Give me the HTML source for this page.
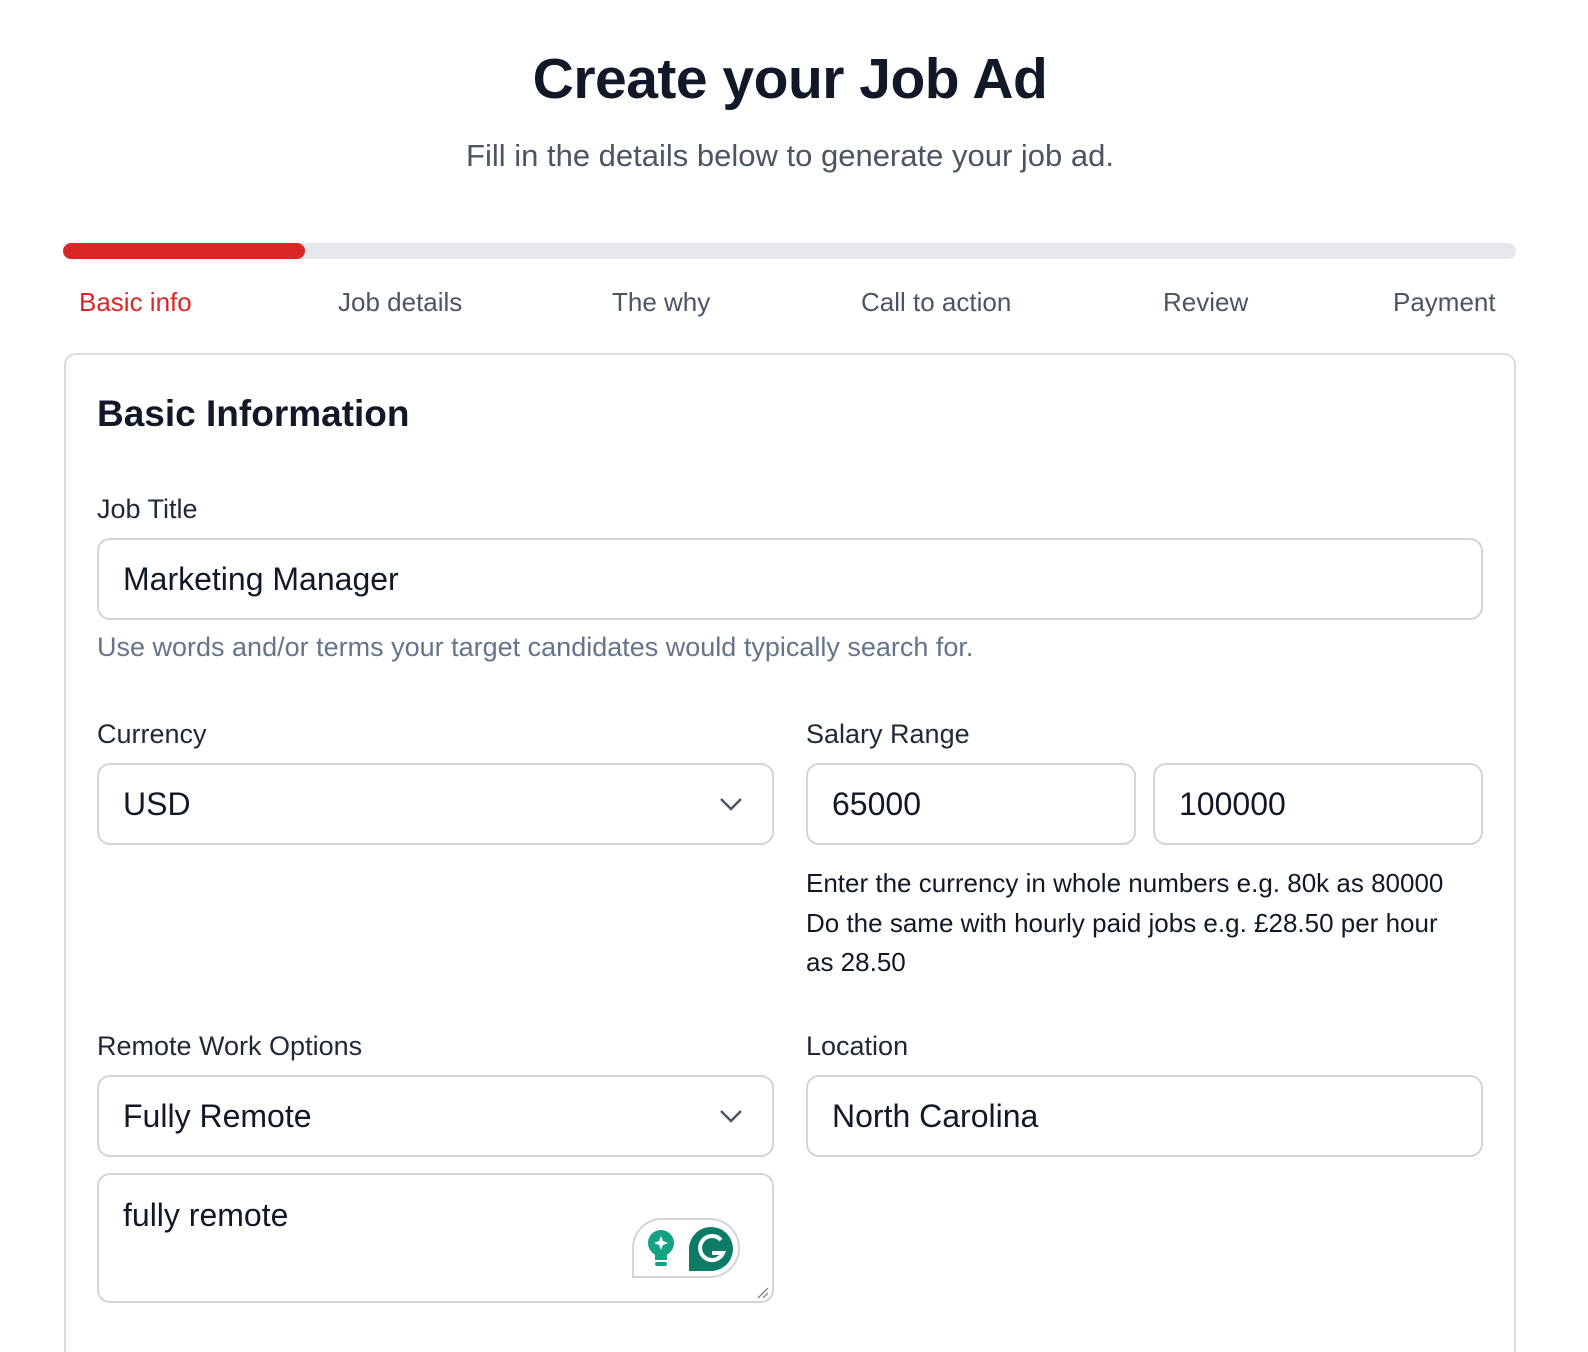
<!DOCTYPE html>
<html><head><meta charset="utf-8"><style>
*{box-sizing:border-box;margin:0;padding:0}
html,body{width:1588px;height:1352px;overflow:hidden}
body{background:#fff;font-family:"Liberation Sans",sans-serif;color:#111827;position:relative}
#wrap{position:absolute;left:0;top:0;width:1588px;height:1352px;overflow:hidden}
.abs{position:absolute}
h1{position:absolute;left:0;width:1580px;text-align:center;top:46px;font-size:57px;font-weight:700;letter-spacing:-0.5px;color:#111827}
.sub{left:0;width:1580px;text-align:center;top:138px;font-size:31px;color:#4b5563}
.bar{left:63px;top:243px;width:1453px;height:16px;border-radius:8px;background:#e5e7eb}
.bar i{position:absolute;left:0;top:0;width:242px;height:16px;border-radius:8px;background:#dc2626}
.tab{top:287px;font-size:26px;color:#4b5563}
.card{left:64px;top:353px;width:1452px;height:1040px;border:2px solid #d8dce2;border-radius:12px}
.lbl{font-size:27px;color:#1f2937}
.inp{border:2px solid #d1d5db;border-radius:13px;height:82px;font-size:32px;padding-left:24px;display:flex;align-items:center;color:#111827}
.help{font-size:27px;color:#64748b}
.chev{position:absolute;right:28px;top:30px}
</style></head><body><div id="wrap">
<h1>Create your Job Ad</h1>
<div class="abs sub">Fill in the details below to generate your job ad.</div>
<div class="abs bar"><i></i></div>
<div class="abs tab" style="left:79px;color:#dc2626">Basic info</div>
<div class="abs tab" style="left:338px">Job details</div>
<div class="abs tab" style="left:612px">The why</div>
<div class="abs tab" style="left:861px">Call to action</div>
<div class="abs tab" style="left:1163px">Review</div>
<div class="abs tab" style="left:1393px">Payment</div>
<div class="abs card"></div>
<div class="abs" style="left:97px;top:393px;font-size:37px;font-weight:700;color:#111827">Basic Information</div>
<div class="abs lbl" style="left:97px;top:494px">Job Title</div>
<div class="abs inp" style="left:97px;top:538px;width:1386px">Marketing Manager</div>
<div class="abs help" style="left:97px;top:632px">Use words and/or terms your target candidates would typically search for.</div>
<div class="abs lbl" style="left:97px;top:719px">Currency</div>
<div class="abs inp" style="left:97px;top:763px;width:677px">USD<svg class="chev" width="26" height="18" viewBox="0 0 26 18"><path d="M3 4l10 10 10-10" fill="none" stroke="#4b5563" stroke-width="2.5"/></svg></div>
<div class="abs lbl" style="left:806px;top:719px">Salary Range</div>
<div class="abs inp" style="left:806px;top:763px;width:330px">65000</div>
<div class="abs inp" style="left:1153px;top:763px;width:330px">100000</div>
<div class="abs" style="left:806px;top:864px;font-size:26px;line-height:39.5px;color:#111827;width:720px">Enter the currency in whole numbers e.g. 80k as 80000<br>Do the same with hourly paid jobs e.g. £28.50 per hour<br>as 28.50</div>
<div class="abs lbl" style="left:97px;top:1031px">Remote Work Options</div>
<div class="abs inp" style="left:97px;top:1075px;width:677px">Fully Remote<svg class="chev" width="26" height="18" viewBox="0 0 26 18"><path d="M3 4l10 10 10-10" fill="none" stroke="#4b5563" stroke-width="2.5"/></svg></div>
<div class="abs lbl" style="left:806px;top:1031px">Location</div>
<div class="abs inp" style="left:806px;top:1075px;width:677px">North Carolina</div>
<div class="abs inp" style="left:97px;top:1173px;width:677px;height:130px;align-items:flex-start;padding-top:22px">fully remote</div>
<div class="abs" style="left:632px;top:1218px;width:108px;height:60px;border:2px solid #d1d5db;border-radius:30px 30px 30px 0;background:#fff"></div>
<svg class="abs" style="left:644px;top:1228px" width="34" height="42" viewBox="0 0 34 42"><circle cx="17" cy="15" r="13" fill="#15a184"/><rect x="11" y="26" width="12" height="6" fill="#15a184"/><rect x="11" y="34" width="12" height="4" rx="2" fill="#15a184"/><path d="M17 8l2 5 5 2-5 2-2 5-2-5-5-2 5-2z" fill="#fff"/></svg>
<svg class="abs" style="left:688px;top:1226px" width="46" height="46" viewBox="0 0 46 46"><path d="M23 1a22 22 0 1 1 0 44H1V23A22 22 0 0 1 23 1z" fill="#0d7c66"/><path d="M33 14a12 12 0 1 0 2 13H24" fill="none" stroke="#fff" stroke-width="4"/></svg>
<svg class="abs" style="left:756px;top:1286px" width="14" height="14"><path d="M2 12L12 2M7 12l5-5" stroke="#6b7280" stroke-width="1.2"/></svg>
</div></body></html>
